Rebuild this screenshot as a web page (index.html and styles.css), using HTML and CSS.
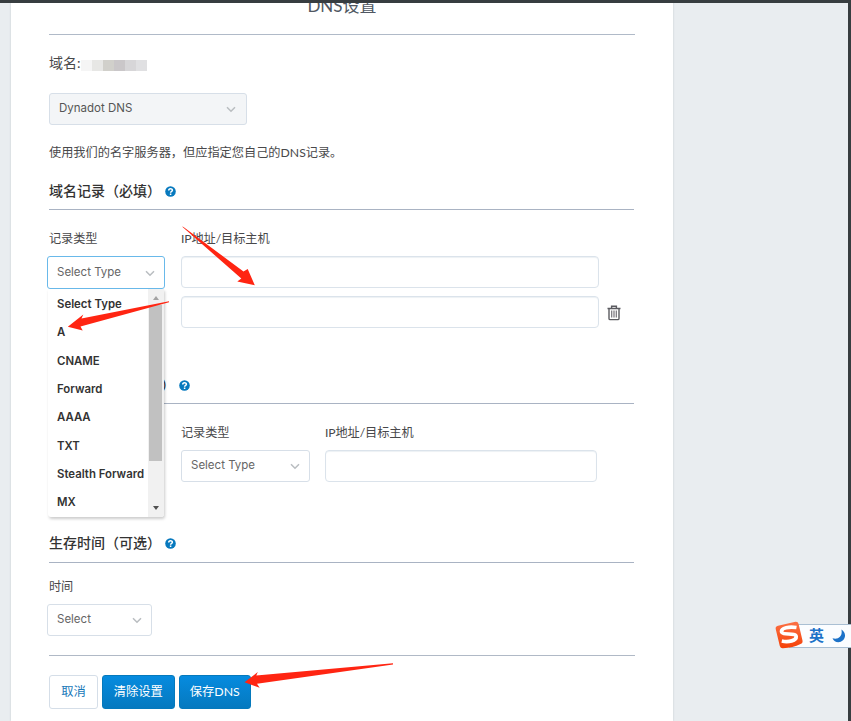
FILE: index.html
```html
<!DOCTYPE html>
<html lang="zh-CN">
<head>
  <meta charset="UTF-8" />
  <meta name="viewport" content="width=device-width, initial-scale=1.0" />
  <title>DNS设置</title>
  <link rel="stylesheet" href="styles.css">
</head>
<body>
  <svg width="0" height="0" class="defs">
    <symbol id="chevron" viewBox="0 0 10 7"><path d="M1 1.2 5 5.2 9 1.2" fill="none" stroke="#b9bdc0" stroke-width="1.5"/></symbol>
    <symbol id="help" viewBox="0 0 11 11">
      <circle cx="5.5" cy="5.5" r="5.3" fill="#0779be"/>
      <path d="M3.7 4.5C3.7 2.2 7.4 2.3 7.4 4.3 7.4 5.5 5.6 5.4 5.6 6.8M5.6 7.6V9" fill="none" stroke="#fff" stroke-width="1.5"/>
    </symbol>
  </svg>

  <div class="window">
    <main class="card">
      <h1 class="title">DNS设置</h1>

      <div class="domain">
        <span>域名:</span>
        <span class="mosaic"><i></i><i></i><i></i><i></i><i></i><i></i></span>
      </div>
      <div class="select server">Dynadot DNS<svg class="chevron"><use href="#chevron"/></svg></div>
      <p class="hint">使用我们的名字服务器，但应指定您自己的DNS记录。</p>

      <section class="records">
        <h2>域名记录（必填）<svg class="help"><use href="#help"/></svg></h2>
        <div class="record-grid">
          <label>记录类型</label>
          <label>IP地址/目标主机</label>
          <div class="type-cell">
            <div class="select focused">Select Type<svg class="chevron"><use href="#chevron"/></svg></div>
            <div class="menu">
              <ul>
                <li>Select Type</li>
                <li>A</li>
                <li>CNAME</li>
                <li>Forward</li>
                <li>AAAA</li>
                <li>TXT</li>
                <li>Stealth Forward</li>
                <li>MX</li>
              </ul>
              <div class="scrollbar">
                <span class="up"></span>
                <span class="thumb"></span>
                <span class="down"></span>
              </div>
            </div>
          </div>
          <input type="text">
          <input type="text" class="second">
          <svg class="trash" viewBox="0 0 14 16">
            <path d="M.5 3.5H13.5M4.6 3V1.3H9.4V3M2 4V13.4Q2 14.6 3.2 14.6H10.8Q12 14.6 12 13.4V4" fill="none" stroke="#5b5b60" stroke-width="1.4"/>
            <path d="M4.7 5.5V12.6M7 5.5V12.6M9.3 5.5V12.6" stroke="#77747b" stroke-width="1.2"/>
          </svg>
        </div>
      </section>

      <section class="subdomains">
        <h2>子域名记录（可选）<svg class="help"><use href="#help"/></svg></h2>
        <div class="sub-grid">
          <label>记录类型</label>
          <label>IP地址/目标主机</label>
          <div class="select">Select Type<svg class="chevron"><use href="#chevron"/></svg></div>
          <input type="text">
        </div>
      </section>

      <section class="ttl">
        <h2>生存时间（可选）<svg class="help"><use href="#help"/></svg></h2>
        <label>时间</label>
        <div class="select">Select<svg class="chevron"><use href="#chevron"/></svg></div>
      </section>

      <div class="actions">
        <button class="plain">取消</button>
        <button>清除设置</button>
        <button>保存DNS</button>
      </div>
    </main>
  </div>

  <svg class="arrows" width="851" height="721" fill="#ff2512">
    <path d="M182 226.5 183.5 227 243.5 271.5 247.7 269 254.8 285.3 237.3 281.5 241.3 278.5Z"/>
    <path d="M169 301.3V302.3L80.5 326.5 82.7 330.4 67.8 326.7 83.3 314.6 81.5 318.6Z"/>
    <path d="M393 663.3V664.5L257 683.7 259.7 687.8 244.5 682.3 257.8 672 256.3 675.6Z"/>
  </svg>

  <div class="ime">
    <svg class="ime-logo" viewBox="0 0 28 28">
      <defs>
        <linearGradient id="orange" x2="0" y2="1"><stop stop-color="#fb7045"/><stop offset="1" stop-color="#f54208"/></linearGradient>
      </defs>
      <path d="M3 4.8 20.5.8Q23 .5 23.6 3L27.5 19.4Q28 22 25.5 23.1 18 27 8 27.2 5.5 27.4 4.8 25L.7 8Q.2 5.5 3 4.8Z" fill="url(#orange)"/>
      <path d="M21.5 6.5C14 5.4 6.3 6.8 6.5 10.5 6.8 14.8 20.8 11.2 21.2 15.6 21.5 19.7 13.5 21.5 6.8 20" fill="none" stroke="#fff" stroke-width="3.7"/>
    </svg>
    <span>英</span>
    <svg class="moon" viewBox="0 0 14 14"><path d="M9.4.5C13.6 3 14.2 8.2 11 11.3 7.5 14.6 2.2 13.5.5 9.3 7 11 10.8 6.8 9.4.5Z" fill="#1c72c8"/></svg>
  </div>
</body>
</html>
```

FILE: styles.css
```css
* {
  box-sizing: border-box;
}

body {
  display: flow-root;
  margin: 0;
  background: #373d40;
  font-family: Lato, "Noto Sans CJK SC", sans-serif;
  font-size: 12.5px;
  color: #48484a;
}

.defs {
  position: absolute;
}

.window {
  height: 718px;
  margin: 3px 3px 0 0;
  padding: 0 175px 0 11px;
  overflow: hidden;
  background: #e9edf0;
}

.card {
  height: 726px;
  margin-top: -8px;
  padding: 0 38px;
  background: #fff;
  box-shadow: 0 0 2px #c3c9ce;
}

.title {
  height: 40px;
  margin: 0;
  padding-top: 1px;
  border-bottom: 1px solid #b0bac8;
  font-size: 17px;
  font-weight: 400;
  line-height: 20px;
  text-align: center;
  color: #505762;
}

.domain {
  display: flex;
  height: 20px;
  margin-top: 18px;
  font-size: 14px;
  line-height: 20px;
}

.domain > span:first-child {
  width: 32px;
  white-space: nowrap;
}

.mosaic {
  display: flex;
  height: 11px;
  margin-top: 7px;
}

.mosaic i {
  width: 11px;
  background: #f5f5f5;
}

.mosaic i:nth-child(2) { background: #e7e7e5; }
.mosaic i:nth-child(3) { background: #d1d0cb; }
.mosaic i:nth-child(4) { background: #cac7c9; }
.mosaic i:nth-child(5) { background: #d7d6d8; }
.mosaic i:nth-child(6) { background: #e0e0e2; }

.select {
  display: flex;
  align-items: center;
  justify-content: space-between;
  height: 33px;
  padding: 0 9px 2px 9px;
  border: 1px solid #d7dfe8;
  border-radius: 3px;
  background: #fff;
  font-family: Inter, sans-serif;
  font-size: 11.5px;
  color: #666;
}

.chevron {
  width: 10px;
  height: 7px;
  margin-top: 3px;
}

.server {
  width: 198px;
  height: 32px;
  margin-top: 20px;
  padding-right: 10px;
  background: #f3f5f7;
  color: #555;
}

.hint {
  margin: 18px 0 0;
  font-size: 12.2px;
  line-height: 20px;
}

h2 {
  display: flex;
  align-items: center;
  width: 585px;
  height: 27px;
  margin: 0;
  padding-bottom: 10px;
  border-bottom: 1px solid #a9b3c3;
  font-size: 14px;
  font-weight: 500;
  line-height: 18px;
  color: #333;
}

.help {
  width: 11px;
  height: 11px;
  margin: 1px 0 0 4px;
}

label {
  display: block;
  height: 18px;
  font-size: 12.2px;
  line-height: 18px;
  letter-spacing: -.1px;
  white-space: nowrap;
}

input {
  width: 100%;
  height: 32px;
  border: 1px solid #dbe3eb;
  border-radius: 4px;
  outline: none;
  box-shadow: inset 0 1px 1px #edf1f4;
}

.records {
  margin-top: 20px;
}

.record-grid {
  display: grid;
  grid-template-columns: 132px 418px 36px;
  grid-template-rows: 18px 33px 32px;
  row-gap: 7px;
  margin-top: 20px;
}

.type-cell {
  position: relative;
  grid-column: 1;
  width: 118px;
  margin: 1px 0 0 -2px;
}

.focused {
  border-color: #69b9ea;
}

.second {
  grid-column: 2;
}

.record-grid input {
  margin-top: 1px;
}

.trash {
  width: 14px;
  height: 16px;
  margin: 10px 0 0 8px;
}

.menu {
  position: absolute;
  top: 33px;
  left: 1px;
  z-index: 5;
  display: flex;
  width: 116px;
  height: 228px;
  overflow: hidden;
  background: #fff;
  border-radius: 0 0 3px 3px;
  box-shadow: 1px 2px 3px rgba(0, 0, 0, .2);
}

.menu ul {
  width: 100px;
  margin: 0;
  padding: 1px 0 0 9px;
  list-style: none;
}

.menu li {
  height: 28.35px;
  font-family: Inter, sans-serif;
  font-size: 11.4px;
  font-weight: 600;
  line-height: 29px;
  white-space: nowrap;
  color: #333;
}

.scrollbar {
  display: flex;
  flex-direction: column;
  align-items: center;
  width: 16px;
  padding: 7px 1px 7px 0;
  background: #f1f1f1;
}

.thumb {
  width: 13px;
  height: 156px;
  margin: 5px 0 auto;
  background: #c1c1c1;
}

.up, .down {
  border: 3.5px solid transparent;
}

.up {
  border-top: 0;
  border-bottom: 4px solid #a3a3a3;
}

.down {
  border-bottom: 0;
  border-top: 4px solid #505050;
}

.subdomains {
  margin-top: 50px;
}

.sub-grid {
  display: grid;
  grid-template-columns: 129px 272px;
  gap: 8px 15px;
  margin: 20px 0 0 132px;
}

.sub-grid .select {
  height: 32px;
}

.ttl {
  height: 120px;
  margin-top: 53px;
}

.ttl h2 {
  height: 28px;
  padding-bottom: 11px;
}

.ttl label {
  margin-top: 15px;
}

.ttl .select {
  width: 105px;
  height: 32px;
  margin: 8px 0 0 -2px;
}

.actions {
  display: flex;
  gap: 4px;
  padding-top: 19px;
  border-top: 1px solid #b0b9c6;
}

button {
  width: 72.5px;
  height: 34px;
  padding: 0 0 2px;
  border: 1px solid #0579bc;
  border-radius: 3px;
  background: linear-gradient(#068bdf, #0579bf);
  font: 12.3px Lato, "Noto Sans CJK SC", sans-serif;
  color: #fff;
}

.plain {
  width: 49px;
  border-color: #d5dee8;
  background: #fff;
  color: #1778b8;
}

/* Pointers drawn over the form */
.arrows {
  position: absolute;
  top: 0;
  left: 0;
  z-index: 10;
  pointer-events: none;
}

.ime {
  position: absolute;
  top: 624px;
  right: 0;
  display: flex;
  align-items: center;
  width: 62px;
  height: 24px;
  border: 1px solid #a9bfd3;
  border-right: 0;
  background: #fbfdff;
  font-size: 15px;
  font-weight: 700;
  line-height: 20px;
  color: #1c72c8;
}

.ime span {
  padding-bottom: 2px;
}

.ime-logo {
  flex: none;
  width: 28px;
  height: 28px;
  margin: -3px 6px 0 -15px;
}

.moon {
  flex: none;
  width: 14px;
  height: 14px;
  margin-left: 8px;
}
```
